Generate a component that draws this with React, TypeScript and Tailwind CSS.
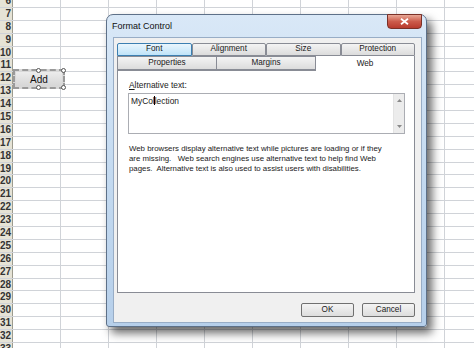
import React from "react";

const FONT = { fontFamily: '"Liberation Sans", Arial, sans-serif' };

function SheetRow({ n }: { n: number }) {
  return (
    <div className="flex h-[12.9px] border-b border-[#d0d3d8] box-border">
      <div className="w-[13px] shrink-0 bg-[#e6e3d6] border-r border-[#9d9b8e] overflow-hidden flex justify-end items-center">
        <span className="text-[10px] leading-none font-bold text-[#333] whitespace-nowrap pr-[1px]">{n}</span>
      </div>
      {Array.from({ length: 10 }).map((_, i) => (
        <div key={i} className="w-[48px] shrink-0 border-r border-[#d0d3d8]" />
      ))}
    </div>
  );
}

function Tab({ label, variant }: { label: string; variant?: "hover" }) {
  if (variant === "hover") {
    return (
      <div className="flex-1 h-full bg-gradient-to-b from-[#eaf6fd] to-[#bfe3f8] border border-[#3c7fb1] rounded-t-[2px] flex items-center justify-center text-[8.2px] text-[#1a1a1a]">
        {label}
      </div>
    );
  }
  return (
    <div className="flex-1 h-full bg-gradient-to-b from-[#f4f4f4] to-[#dcdcdc] border border-[#898c95] rounded-t-[2px] flex items-center justify-center text-[8.2px] text-[#1a1a1a]">
      {label}
    </div>
  );
}

export default function App() {
  const rows = Array.from({ length: 28 }, (_, i) => i + 6);
  return (
    <div className="relative w-[474px] h-[348px] overflow-hidden bg-white" style={FONT}>
      {/* spreadsheet */}
      <div className="-mt-[5px]">
        {rows.map((n) => (
          <SheetRow key={n} n={n} />
        ))}
      </div>

      {/* Add button control (selected) */}
      <div className="absolute left-[13px] top-[69px] w-[52px] h-[20px] border-[2px] border-dashed border-[#9a9a9a] bg-[#d8d8d8]">
        <div className="absolute inset-[1px] bg-gradient-to-b from-[#ececec] to-[#d6d6d6] flex items-center justify-center text-[10px] text-[#111]">
          Add
        </div>
        <div className="absolute -top-[3px] left-[21px] w-[5px] h-[5px] rounded-full bg-white border border-[#555]" />
        <div className="absolute -top-[3px] -right-[3px] w-[5px] h-[5px] rounded-full bg-white border border-[#555]" />
        <div className="absolute -bottom-[3px] left-[21px] w-[5px] h-[5px] rounded-full bg-white border border-[#555]" />
        <div className="absolute -bottom-[3px] -right-[3px] w-[5px] h-[5px] rounded-full bg-white border border-[#555]" />
      </div>

      {/* dialog */}
      <div className="absolute left-[106px] top-[14px] w-[321px] h-[313px] rounded-t-[7px] rounded-b-[3px] border border-[#5d7088] bg-gradient-to-b from-[#d9e8f7] via-[#c4daf0] to-[#b6cfea] shadow-[5px_6px_10px_rgba(0,0,0,0.6)] flex flex-col">
        <div className="relative h-[22px] shrink-0 flex items-center pl-[5px]">
          <span className="text-[9px] text-[#101010] mt-[1px]">Format Control</span>
          <div className="absolute -top-px right-[4px] w-[35px] h-[15px] rounded-b-[4px] border border-[#7a3027] bg-gradient-to-b from-[#e7a796] via-[#cc5b4b] to-[#b83b2e] flex items-center justify-center">
            <svg width="9" height="7" viewBox="0 0 9 7">
              <path d="M1 0.8 L8 6.2 M8 0.8 L1 6.2" stroke="#ffffff" strokeWidth="1.8" />
            </svg>
          </div>
        </div>
        <div className="flex-1 ml-[6px] mr-[4px] mb-[3px] bg-[#f0f0f0] border border-[#98adc6] flex flex-col pl-[3px] pt-[5px]">
          <div className="w-[298px] flex flex-col">
            <div className="flex h-[13px]">
              <Tab label="Font" variant="hover" />
              <Tab label="Alignment" />
              <Tab label="Size" />
              <Tab label="Protection" />
            </div>
            <div className="flex h-[14px] items-end">
              <div className="flex-1 h-[14px] -mt-px bg-gradient-to-b from-[#f4f4f4] to-[#dcdcdc] border border-[#898c95] flex items-center justify-center text-[8.2px] text-[#1a1a1a]">
                Properties
              </div>
              <div className="flex-1 h-[14px] -mt-px bg-gradient-to-b from-[#f4f4f4] to-[#dcdcdc] border border-l-0 border-[#898c95] flex items-center justify-center text-[8.2px] text-[#1a1a1a]">
                Margins
              </div>
              <div className="flex-1 h-[15px] -mb-px bg-white border-t-0 border-r border-[#898c95] flex items-start justify-center pt-[2px] text-[8.2px] text-[#1a1a1a] z-10">
                Web
              </div>
            </div>
            <div className="h-[223px] bg-white border border-[#898c95] flex flex-col pl-[11px] pr-[9px]">
              <div className="mt-[10px] text-[8.4px] text-[#1a1a1a] leading-none">
                <span className="underline">A</span>lternative text:
              </div>
              <div className="mt-[4px] -ml-px h-[41px] border border-[#abadb3] flex">
                <div className="flex-1 pl-[2px] pt-[3px] text-[8.4px] text-[#1a1a1a] leading-none flex items-start">
                  <span>MyCol</span>
                  <span className="inline-block w-px h-[9px] bg-black -ml-[1px] -mt-[1px]" />
                  <span>lection</span>
                </div>
                <div className="w-[11px] bg-[#ececec] border-l border-[#e3e3e3] flex flex-col items-center justify-between py-[5px]">
                  <svg width="5" height="3" viewBox="0 0 5 3">
                    <path d="M0 3 L2.5 0 L5 3 Z" fill="#8a8a8a" />
                  </svg>
                  <svg width="5" height="3" viewBox="0 0 5 3">
                    <path d="M0 0 L2.5 3 L5 0 Z" fill="#8a8a8a" />
                  </svg>
                </div>
              </div>
              <div className="mt-[10px] text-[7.85px] leading-[9.7px] text-[#1a1a1a] whitespace-pre">
                {"Web browsers display alternative text while pictures are loading or if they\nare missing.   Web search engines use alternative text to help find Web\npages.  Alternative text is also used to assist users with disabilities."}
              </div>
            </div>
          </div>
          <div className="w-[298px] flex justify-end gap-[8px] mt-[10px]">
            <div className="w-[53px] h-[14px] rounded-[2px] border border-[#707070] bg-gradient-to-b from-[#f4f4f4] to-[#dddddd] flex items-center justify-center text-[8.2px] text-[#1a1a1a]">
              OK
            </div>
            <div className="w-[53px] h-[14px] rounded-[2px] border border-[#707070] bg-gradient-to-b from-[#f4f4f4] to-[#dddddd] flex items-center justify-center text-[8.2px] text-[#1a1a1a]">
              Cancel
            </div>
          </div>
        </div>
      </div>
    </div>
  );
}
